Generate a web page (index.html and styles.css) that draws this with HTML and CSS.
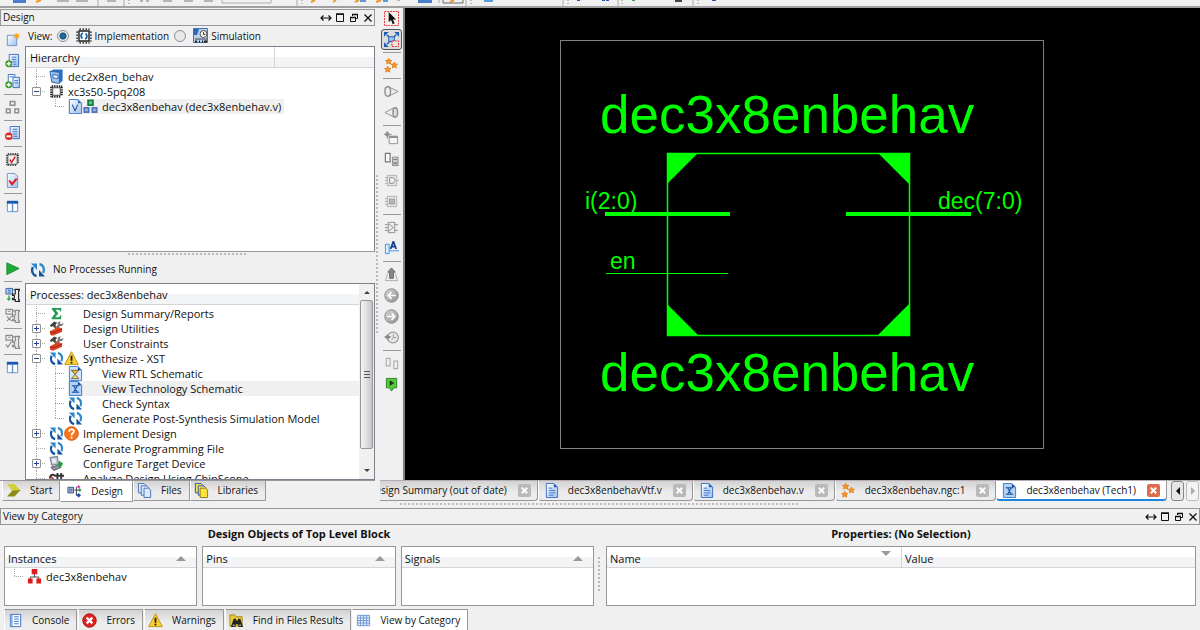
FILE: index.html
```html
<!DOCTYPE html>
<html lang="en">
<head>
    <meta charset="UTF-8">
    <meta name="viewport" content="width=device-width, initial-scale=1.0">
    <title>ISE Project Navigator - dec3x8enbehav</title>
    <link rel="stylesheet" href="styles.css">
</head>
<body>
    <!-- icon set -->
    <svg class="sprite" aria-hidden="true">
        <defs>
            <linearGradient id="paper" x1="0" y1="0" x2="1" y2="1"><stop offset="0" stop-color="#fff"/><stop offset="1" stop-color="#9cc0ec"/></linearGradient>
            <linearGradient id="ball" x1="0" y1="0" x2="1" y2="1"><stop offset="0" stop-color="#d8d8d8"/><stop offset="1" stop-color="#8e8e8e"/></linearGradient>
            <symbol id="i-new" viewBox="0 0 16 16"><path d="M2.500 3.500h10v11h-10z" fill="url(#paper)" stroke="#6f93c9"/><path d="M12 0l1 2.500 2.500-1-1 2.500 1.500 1-2 .8.300 2.200-2.300-1.500-1.800 1 .5-2.200-2.200-1 2.300-.8-.6-2 1.800 1z" fill="#f7a823"/></symbol>
            <symbol id="i-doc" viewBox="0 0 16 16"><path d="M2.500.500h8l4 4v11h-12z" fill="url(#paper)" stroke="#3a6fc4"/><path d="M10.500.500v4h4z" fill="#1d57b8"/><path d="M5 5.500h4M5 8h7M5 10.500h7M5 13h5" stroke="#3470cc" fill="none"/></symbol>
            <symbol id="i-add" viewBox="0 0 16 16"><path d="M4.500 1.500h10v13h-10z" fill="url(#paper)" stroke="#3a6fc4"/><path d="M7 4.500h5M7 7h5M7 9.500h5M9 12h3" stroke="#3470cc"/><circle cx="4" cy="11.500" r="3.700" fill="#3f9c2c"/><path d="M4 9.300v4.400M1.800 11.500h4.400" stroke="#fff" stroke-width="1.500"/></symbol>
            <symbol id="i-addcopy" viewBox="0 0 16 16"><path d="M3.500.500h7v10h-7z" fill="#fff" stroke="#3a6fc4"/><path d="M8.500 3.500h7v11h-7z" fill="url(#paper)" stroke="#3a6fc4"/><path d="M5 3h4M10 7h4M10 9.500h4" stroke="#3470cc"/><circle cx="4" cy="11.500" r="3.700" fill="#3f9c2c"/><path d="M4 9.300v4.400M1.800 11.500h4.400" stroke="#fff" stroke-width="1.500"/></symbol>
            <symbol id="i-remove" viewBox="0 0 16 16"><path d="M5.500.500h10v13h-10z" fill="url(#paper)" stroke="#3a6fc4"/><path d="M8 3.500h5M8 6h5M8 8.500h5M9 11h4" stroke="#3470cc"/><circle cx="4" cy="11" r="4" fill="#e0261c"/><path d="M1.500 11h5" stroke="#fff" stroke-width="2"/></symbol>
            <symbol id="i-hier-gray" viewBox="0 0 16 16"><g fill="#eee" stroke="#8f8f8f" stroke-width="1.600"><path d="M5.500 1.500h5v4h-5zM1.500 9.500h4v4h-4zM10.500 9.500h4v4h-4z"/></g></symbol>
            <symbol id="i-hier-green" viewBox="0 0 16 16"><path d="M5.500 1.500h5v5h-5z" fill="#6cc48d" stroke="#138342" stroke-width="2"/><path d="M1.500 9.500h4.500v4.500h-4.500zM10 9.500h4.500v4.500h-4.500z" fill="#a9bfe6" stroke="#5274bd" stroke-width="2"/></symbol>
            <symbol id="i-hier-red" viewBox="0 0 16 16"><path d="M8 5v4M3.500 11V8.500h9V11" fill="none" stroke="#444"/><path d="M5 0h6v5.500H5zM1 10h5v5.500H1zM10 10h5v5.500h-5z" fill="#e01b1f"/></symbol>
            <symbol id="i-chipcheck" viewBox="0 0 16 16"><path d="M3 3h10v10H3z" fill="#f4f4f4" stroke="#555"/><path d="M3 2h11M3 14h10M2 3v11M14 3v10" stroke="#444" stroke-width="2" stroke-dasharray="1.300 1.200"/><path d="M5 8l2 3 4-6" fill="none" stroke="#dc1f26" stroke-width="1.600"/></symbol>
            <symbol id="i-doccheck" viewBox="0 0 16 16"><path d="M2.500.500h8l3 3v12h-11z" fill="url(#paper)" stroke="#6f93c9"/><path d="M4.500 8l3 4 5-6" fill="none" stroke="#dc1f26" stroke-width="2.200"/></symbol>
            <symbol id="i-table" viewBox="0 0 16 16"><path d="M2.500 2.500h11v11h-11z" fill="#fff" stroke="#5e8fd0"/><path d="M2 2h12v3H2z" fill="#1758b5"/><path d="M8 5v9" stroke="#5e8fd0" stroke-width="1.500"/></symbol>
            <symbol id="i-play" viewBox="0 0 16 16"><path d="M2 2l13 6-13 6.500z" fill="#1eaa3a" stroke="#178c2e"/></symbol>
            <symbol id="i-run" viewBox="0 0 16 16"><path d="M1 1.500h7v6H1z" fill="#bcd4f4" stroke="#31649f"/><path d="M3 3.500h3M3 5.500h3M8 3h3" stroke="#31649f"/><path d="M3.500 9v3H1.500L4 15l2.500-3H5V9z" fill="#2bab3f"/><path d="M11 2.500h5V4h-1.500v10H16v1.500h-5v-2H8V12h2V9H8V7.500h3z" fill="#eee" stroke="#222" stroke-width="1.200"/></symbol>
            <symbol id="i-runx" viewBox="0 0 16 16"><path d="M1 1.500h7v5H1zM3 3.500h3M8 3h3M2 9l5 5M7 9l-5 5" stroke="#8c8c8c" stroke-width="1.200" fill="none"/><path d="M11 2.500h5V4h-1.500v10H16v1.500h-5v-2H8V12h2V9H8V7.500h3z" fill="#e4e4e4" stroke="#8a8a8a" stroke-width="1.200"/></symbol>
            <symbol id="i-runck" viewBox="0 0 16 16"><path d="M1 1.500h7v5H1zM3 3.500h3M8 3h3M1 11l2 3 4-6" stroke="#8c8c8c" stroke-width="1.200" fill="none"/><path d="M11 2.500h5V4h-1.500v10H16v1.500h-5v-2H8V12h2V9H8V7.500h3z" fill="#e4e4e4" stroke="#8a8a8a" stroke-width="1.200"/></symbol>
            <symbol id="i-chip" viewBox="0 0 16 16"><path d="M4 4h8v8H4z" fill="#fff" stroke="#555"/><path d="M3 2.500h11M3 13.500h10M2.500 3v11M13.500 3v10" stroke="#222" stroke-width="2.500" stroke-dasharray="1.500 1"/></symbol>
            <symbol id="i-chipview" viewBox="0 0 16 16"><path d="M3 3h10v10H3z" fill="#fff" stroke="#222" stroke-width="1.400"/><path d="M3.500 1.200h10M3.500 14.800h10M1.200 3.500v10M14.800 3.500v10" stroke="#222" stroke-width="2" stroke-dasharray="1.300 1.700"/><path d="M7 5C4.500 6 4.500 9 6.500 10.500M9 11c2.500-1 2.500-4 .5-5.500" fill="none" stroke="#1766ae" stroke-width="1.800"/></symbol>
            <symbol id="i-sim" viewBox="0 0 16 16"><path d="M.500.500h14v14H.500z" fill="#b9cfea" stroke="#4673ad"/><path d="M1 1h5l-2 6H1z" fill="#2968ba"/><circle cx="10.500" cy="6" r="3.500" fill="#eee" stroke="#555"/><path d="M10.500 4v2.500h2M2 11h12" fill="none" stroke="#444"/><path d="M2 13.500h2M6 13.500h1M9 13.500h1M11 13.500h3" stroke="#222" stroke-width="2"/></symbol>
            <symbol id="i-project" viewBox="0 0 16 16"><path d="M2 2l3-1.500h9.500v12L12 15z" fill="#2c70c1"/><path d="M1 2.500l10 1V15.500L3 14z" fill="#9cc4ee" stroke="#2361b0"/><path d="M4 6l5.500.700v3.500L4.500 9.500z" fill="#fff" stroke="#2361b0"/></symbol>
            <symbol id="i-verilog" viewBox="0 0 16 16"><path d="M1.500.500h9l4 4v11h-13z" fill="url(#paper)" stroke="#3a7bd0"/><path d="M10.500.500v4h4z" fill="#2c6cc2"/><path d="M4.500 6l3 6.500 3-6.500" fill="none" stroke="#1b4f9c" stroke-width="1.200"/></symbol>
            <symbol id="i-sigma" viewBox="0 0 16 16"><path d="M3 2h10v3.500h-1.300L11 4H7l3 4-3.500 4H11l1-1.800h1.300L12.700 14H3v-1.500L6.500 8 3 3.500z" fill="#1d9c51"/></symbol>
            <symbol id="i-tools" viewBox="0 0 16 16"><path d="M6 6l6 6" stroke="#9a5b2c" stroke-width="2.500"/><path d="M1 4.500L5.500.500 9.500 2l-2 .8L6.500 7 4 5.500 2 6.500z" fill="#444"/><path d="M15.500 2l-3 1.500-1-1.500 1.500-1.500C10 0 9 2 9.500 4L7 7l1.500 1.500 3-3C13.500 6 15.500 4 15.500 2z" fill="#777"/><path d="M1 11l9-4.500 4 1.500v3.500L5 15.500H2.500L1 14z" fill="#dd4424"/><path d="M1 11.500l4 1 9-4" stroke="#8c2412" fill="none"/></symbol>
            <symbol id="i-cycle" viewBox="0 0 16 16"><path d="M6.500 14C2.500 13 1 9 2.800 5" fill="none" stroke="#15559d" stroke-width="2.400"/><path d="M1 1.500h6V8z" fill="#2f88cc"/><path d="M9.500 2C13.500 3 15 7 13.200 11" fill="none" stroke="#2f88cc" stroke-width="2.400"/><path d="M15 14.500H9V8z" fill="#15559d"/></symbol>
            <symbol id="i-warn" viewBox="0 0 16 16"><path d="M8 .8l7.300 13.700H.700z" fill="#fbd02f" stroke="#c09113"/><path d="M8 5v5.500M8 11.500v1.800" stroke="#222" stroke-width="2"/></symbol>
            <symbol id="i-rtl" viewBox="0 0 16 16"><path d="M1.500.500h9l4 4v11h-13z" fill="#d4e5fa" stroke="#3a7bd0"/><path d="M10.500.500v4h4z" fill="#174f9e"/><path d="M3.500 4.500h8L7.500 9z" fill="#f2b81f" stroke="#333" stroke-width=".7"/><path d="M3.500 13.500h8l-4-4.500z" fill="#fbd953" stroke="#333" stroke-width=".7"/></symbol>
            <symbol id="i-tech" viewBox="0 0 16 16"><path d="M1.500.500h9l4 4v11h-13z" fill="#b5d2f5" stroke="#3a7bd0"/><path d="M10.500.500v4h4z" fill="#174f9e"/><path d="M4 5h2l4 7h2M4 12h2l4-7h2M6 5h4M6 12h4" fill="none" stroke="#16509f" stroke-width="1.200"/></symbol>
            <symbol id="i-question" viewBox="0 0 16 16"><circle cx="8" cy="8" r="7.300" fill="#f5751a" stroke="#d85410"/><path d="M5.500 6c0-3.500 5.500-3 5 0-.3 1.500-2.500 1.700-2.500 4M8 11.500v1.800" fill="none" stroke="#fff" stroke-width="1.900"/></symbol>
            <symbol id="i-config" viewBox="0 0 16 16"><path d="M1 1.500l8-1 1 8-7 1.500z" fill="#c6cad8" stroke="#666c86"/><path d="M3 3.500l4-.5.5 4-3.500.7z" fill="#e9edf7"/><path d="M2 12l8-2 3 2-8 3.500z" fill="#8f95aa" stroke="#555"/><path d="M11 5l4 3-3 5-3-3z" fill="#2a9c44"/></symbol>
            <symbol id="i-scope" viewBox="0 0 16 16"><path d="M1 8c0-5 5-5 6-2M9 2v12M13 2v12M7 5h9M7 10h9" fill="none" stroke="#333" stroke-width="2"/><path d="M2 6l3 3" stroke="#cf3b22" stroke-width="2"/></symbol>
            <symbol id="i-start" viewBox="0 0 16 16"><path d="M1 1h8l6.500 6.500L9 9H7z" fill="#d3d13b"/><path d="M7 8l8.500-.5L9 14.500H1z" fill="#8d8c14"/></symbol>
            <symbol id="i-design" viewBox="0 0 16 16"><path d="M1 3.500h6v6H1z" fill="#cbd9ee" stroke="#26477f"/><path d="M2 5.500h4M2 7.500h4" stroke="#26477f"/><path d="M8 6.500h4M10 3v9h2" stroke="#334" fill="none"/><path d="M12.500 1l2 2-2 2-2-2z" fill="#d54ba6"/><path d="M13.500 4.500l2 2-2 2-2-2z" fill="#2a9c44"/><path d="M12.500 9.500l2.500 2.500-2.500 2.500L10 12z" fill="#1d50b0"/></symbol>
            <symbol id="i-files" viewBox="0 0 16 16"><g fill="#dce9fa" stroke="#4471b5"><path d="M1.500.500h6l2 2v8h-8z"/><path d="M4.500 3h6l2 2v8h-8z"/><path d="M7.500 5.500h5l2 2v8h-7z"/></g></symbol>
            <symbol id="i-libs" viewBox="0 0 16 16"><path d="M1.500.500h6l2 2v8h-8z" fill="#f7e15a" stroke="#2257a5"/><path d="M4.500 3h6l2 2v8h-8z" fill="#fbe96f" stroke="#2257a5"/><path d="M6.500 5.500h6l2 2v8h-8z" fill="#fde43c" stroke="#87741a"/></symbol>
            <symbol id="i-stars" viewBox="0 0 16 16"><g fill="#f49a2a" stroke="#e3801a"><path id="star" d="M5 .500l1 2 2.300.200-1.700 1.500.500 2.300L5 5.300 2.900 6.500l.5-2.300L1.700 2.700 4 2.500z"/><use href="#star" x="6" y="4"/><use href="#star" x="-1" y="8.500"/></g></symbol>
            <symbol id="i-console" viewBox="0 0 16 16"><path d="M2.500 1.500h11v13h-11z" fill="#fff" stroke="#3a6fc4"/><path d="M3 2h2v12H3z" fill="#86b2ec"/><path d="M6.500 4h5M6.500 6.500h5M6.500 9h5M6.500 11.500h5" stroke="#3470cc"/></symbol>
            <symbol id="i-error" viewBox="0 0 16 16"><circle cx="8" cy="8" r="7.200" fill="#dc2320" stroke="#a91410"/><path d="M5 5l6 6M11 5l-6 6" stroke="#fff" stroke-width="2.500"/></symbol>
            <symbol id="i-find" viewBox="0 0 16 16"><path d="M1 2h5l1.500 2H14v10H1z" fill="#e9c93a" stroke="#a68714"/><path d="M5 6h2.500v2h2V6H12l3 9h-4.500l-1-3h-2l-1 3H2z" fill="#222"/><path d="M4 13h2M11 13h2" stroke="#fff"/></symbol>
            <symbol id="i-grid" viewBox="0 0 16 16"><path d="M1.500 2.500h13v11h-13z" fill="#e4eefb"/><path d="M1.500 2.500h13v11h-13zM1 5.300h14M1 8h14M1 10.700h14M4.700 2v12M8 2v12M11.300 2v12" fill="none" stroke="#6b97d6"/></symbol>
            <symbol id="i-select" viewBox="0 0 16 16"><path d="M.500.500h15v15H.500z" fill="#f7f0f0" stroke="#e2222c" stroke-dasharray="2 1"/><path d="M5 1v11l2.500-2.300L9.300 14l2-.9L9.500 9H13z" fill="#111"/></symbol>
            <symbol id="i-zoomfit" viewBox="0 0 16 16"><path d="M3 3l10 10M13 3L3 13" stroke="#1c5cb4" stroke-width="1.500"/><path d="M0 0h5L0 5zM16 0h-5l5 5zM0 16h5l-5-5z" fill="#1c5cb4"/><path d="M5 5h6v5H5z" fill="#9bc2f0" stroke="#1c5cb4"/><path d="M8.500 9.500h7v6h-7z" fill="#fbe4e4" stroke="#e2222c" stroke-dasharray="2 1"/></symbol>
            <symbol id="i-gate-r" viewBox="0 0 16 16"><path d="M4 2.500l11 5.500-11 5.500" fill="#eee" stroke="#8f8f8f"/><ellipse cx="4" cy="8" rx="3" ry="5" fill="#eee" stroke="#8f8f8f" stroke-width="1.500"/></symbol>
            <symbol id="i-gate-l" viewBox="0 0 16 16"><path d="M12 2.500L1 8l11 5.500" fill="#eee" stroke="#8f8f8f"/><ellipse cx="12" cy="8" rx="2.500" ry="5" fill="#ddd" stroke="#8f8f8f" stroke-width="1.500"/></symbol>
            <symbol id="i-push" viewBox="0 0 16 16"><path d="M5.500 5.500h9v8h-9z" fill="#f5f5f5" stroke="#8f8f8f"/><path d="M5.500 6.500h9" stroke="#8f8f8f" stroke-width="2"/><path d="M2 2h3v3H2zM0 3.500h8M3.500 0v8" stroke="#888" fill="#ccc"/></symbol>
            <symbol id="i-pop" viewBox="0 0 16 16"><path d="M1.500 1.500h5v9h-5z" fill="#fafafa" stroke="#777" stroke-width="1.300"/><path d="M9 5.500h6v9H9z" fill="#ccc" stroke="#888"/><path d="M10 8h4M10 11l4 2M14 11l-4 2" stroke="#777"/></symbol>
            <symbol id="i-block" viewBox="0 0 16 16"><path d="M3.500 2.500h10v11h-10z" fill="#e3e3e3" stroke="#b0b0b0"/><path d="M6 5h4l2 3-2 3H6z" fill="#eee" stroke="#8c8c8c"/><path d="M1 5h3M1 8h3M1 11h3M13 8h3" stroke="#aaa"/></symbol>
            <symbol id="i-blockx" viewBox="0 0 16 16"><path d="M3.500 2.500h10v11h-10z" fill="#e3e3e3" stroke="#b0b0b0"/><path d="M6 5.500h5v5H6zM6 5.500l5 5M11 5.500l-5 5" fill="none" stroke="#8c8c8c"/><path d="M1 5h3M1 8h3M1 11h3" stroke="#aaa"/></symbol>
            <symbol id="i-mux" viewBox="0 0 16 16"><path d="M4.500 2.500h7v11h-7z" fill="#eee" stroke="#8c8c8c"/><path d="M5 4l5 4-5 4M1 5h3M1 8h3M1 11h3M11 5h4M11 11h4" fill="none" stroke="#8c8c8c"/></symbol>
            <symbol id="i-label" viewBox="0 0 16 16"><path d="M1.500 3.500h4v10h-4z" fill="#d4efff" stroke="#3d8fe0"/><path d="M6 10.500h10" stroke="#3d8fe0"/><path d="M7 8.500l3-8 3 8M8 6h4" fill="none" stroke="#123f8f" stroke-width="1.800"/></symbol>
            <symbol id="i-up" viewBox="0 0 16 16"><path d="M4 7L1.500 14.500h13L12 7" fill="#eee" stroke="#aaa"/><path d="M8 1l4 4.500h-2V12H6V5.500H4z" fill="#888" stroke="#666"/></symbol>
            <symbol id="i-back" viewBox="0 0 16 16"><circle cx="8" cy="8" r="7.200" fill="url(#ball)" stroke="#8a8a8a"/><path d="M12.500 8H5M8 4.500L4.500 8 8 11.500" fill="none" stroke="#fff" stroke-width="1.800"/></symbol>
            <symbol id="i-fwd" viewBox="0 0 16 16"><circle cx="8" cy="8" r="7.200" fill="url(#ball)" stroke="#8a8a8a"/><path d="M3.500 8H11M8 4.500L11.500 8 8 11.500" fill="none" stroke="#fff" stroke-width="1.800"/></symbol>
            <symbol id="i-history" viewBox="0 0 16 16"><circle cx="9.500" cy="8" r="5.800" fill="#e8e8e8" stroke="#999" stroke-width="1.300"/><path d="M10 4.500V8h3M10 8l-2 2.500" stroke="#999" fill="none"/><path d="M0 7.500L5 4v2.500h2v2H5V11z" fill="#8b8b8b"/></symbol>
            <symbol id="i-compare" viewBox="0 0 16 16"><path d="M2.500 2.500h4v8h-4zM10.500 5.500h4v8h-4z" fill="#f2f2f2" stroke="#b0b0b0" stroke-width="1.300"/></symbol>
            <symbol id="i-flag" viewBox="0 0 16 16"><path d="M2.500 1.500h11v10h-3L8 15l-2-3.500H2.500z" fill="#55c83c" stroke="#2c8220"/><path d="M6 3.500l5 3-5 3z" fill="#173c14"/></symbol>
            <symbol id="i-float" viewBox="0 0 12 12"><path d="M1 6h10M3.500 3.500L1 6l2.500 2.500M8.500 3.500L11 6 8.500 8.500" fill="none" stroke="#111" stroke-width="1.200"/></symbol>
            <symbol id="i-max" viewBox="0 0 12 12"><path d="M2.500 2.500h7v7h-7z" fill="none" stroke="#111"/><path d="M2 2h8" stroke="#111" stroke-width="1.500"/></symbol>
            <symbol id="i-restore" viewBox="0 0 12 12"><path d="M4.500 4V2.500h5v4H8M2.500 5.500h5v4h-5z" fill="none" stroke="#111"/><path d="M4 2.500h6M2 5.500h6" stroke="#111" stroke-width="1.500"/></symbol>
            <symbol id="i-close" viewBox="0 0 12 12"><path d="M2.500 2.500l7 7M9.500 2.500l-7 7" stroke="#111" stroke-width="1.300"/></symbol>
            <symbol id="i-tabx" viewBox="0 0 12 12"><path d="M3.500 3.500l5 5M8.500 3.500l-5 5" stroke="#fff" stroke-width="1.800"/></symbol>
        </defs>
    </svg>

    <header class="main-toolbar">
        <svg width="760" height="6" aria-hidden="true">
            <path d="M13 0h13v3H13zM418 0h14v3h-14z" fill="#4b7fce"/>
            <path d="M36 2l5-2M311 2l4-2M333 2l3-2M355 2l4-2M376 2l5-2M450 2l4-2" stroke="#ea9a2c" stroke-width="2"/>
            <path d="M57 1h12M76 1h12M107 1h9M140 1h3M146 1h3M163 1h9M184 1h9M204 1h9M397 0h3" stroke="#b5b5b5" stroke-width="2"/>
            <path d="M98 0v6M124 0v6M222 0v3h49v-3M297 0v6M439 0v3M466 0v6M563 0v6M618 0v6M693 0v6" fill="none" stroke="#aaa"/>
            <path d="M129 0v6M302 0v6M471 0v6M568 0v6M622 0v6M698 0v6" stroke="#bbb" stroke-width="2" stroke-dasharray="1 2"/>
            <path d="M443 0v3h20v-3" fill="none" stroke="#666"/>
            <path d="M484 1h9M360 1h6M383 1h5" stroke="#5d9bd8" stroke-width="2"/>
            <path d="M577 0h3M602 0h3M606 0h3M712 0h4" stroke="#2b55a8" stroke-width="2"/>
            <path d="M632 0h3" stroke="#3a9c4c" stroke-width="2"/><path d="M675 1h7" stroke="#444" stroke-width="2"/>
        </svg>
    </header>

    <main class="workspace">
        <section class="dock">
            <div class="dock-title">
                <span>Design</span>
                <div class="dock-buttons">
                    <button aria-label="Float"><svg><use href="#i-float"/></svg></button>
                    <button aria-label="Maximize"><svg><use href="#i-max"/></svg></button>
                    <button aria-label="Restore"><svg><use href="#i-restore"/></svg></button>
                    <button aria-label="Close"><svg><use href="#i-close"/></svg></button>
                </div>
            </div>

            <div class="pane hierarchy-pane">
                <div class="side-tools">
                    <button aria-label="New source"><svg><use href="#i-new"/></svg></button>
                    <button aria-label="Add source"><svg><use href="#i-add"/></svg></button>
                    <button aria-label="Add copy of source"><svg><use href="#i-addcopy"/></svg></button>
                    <hr>
                    <button aria-label="Hierarchy"><svg><use href="#i-hier-gray"/></svg></button>
                    <hr>
                    <button aria-label="Remove source"><svg><use href="#i-remove"/></svg></button>
                    <hr>
                    <button aria-label="Design properties"><svg><use href="#i-chipcheck"/></svg></button>
                    <button aria-label="Design goals"><svg><use href="#i-doccheck"/></svg></button>
                    <hr>
                    <button aria-label="Columns"><svg><use href="#i-table"/></svg></button>
                </div>
                <div class="pane-body">
                    <div class="view-row">
                        <span>View:</span>
                        <input type="radio" name="view" id="view-impl" checked>
                        <label for="view-impl"><svg><use href="#i-chipview"/></svg>Implementation</label>
                        <input type="radio" name="view" id="view-sim">
                        <label for="view-sim"><svg><use href="#i-sim"/></svg>Simulation</label>
                    </div>
                    <div class="tree-box">
                        <div class="tree-head"><span class="head-cell">Hierarchy</span></div>
                        <ul class="tree">
                            <li><i class="tee"></i><svg><use href="#i-project"/></svg><span>dec2x8en_behav</span></li>
                            <li><i class="node last"><button class="minus" aria-label="Collapse"></button></i><svg><use href="#i-chip"/></svg><span>xc3s50-5pq208</span></li>
                            <li><i></i><i class="elbow"></i><div class="picked"><svg><use href="#i-verilog"/></svg><svg><use href="#i-hier-green"/></svg><span>dec3x8enbehav (dec3x8enbehav.v)</span></div></li>
                        </ul>
                    </div>
                </div>
            </div>

            <div class="grip-h"></div>

            <div class="pane process-pane">
                <div class="side-tools">
                    <button aria-label="Run"><svg><use href="#i-play"/></svg></button>
                    <hr>
                    <button aria-label="Run process"><svg><use href="#i-run"/></svg></button>
                    <button aria-label="Stop process"><svg><use href="#i-runx"/></svg></button>
                    <hr>
                    <button aria-label="Force up to date"><svg><use href="#i-runck"/></svg></button>
                    <hr>
                    <button aria-label="Columns"><svg><use href="#i-table"/></svg></button>
                </div>
                <div class="pane-body">
                    <div class="status-row"><svg><use href="#i-cycle"/></svg>No Processes Running</div>
                    <div class="tree-box scrolled">
                        <div class="tree-area">
                            <div class="tree-head">Processes: dec3x8enbehav</div>
                            <ul class="tree">
                                <li><i class="tee"></i><svg><use href="#i-sigma"/></svg><span class="wide">Design Summary/Reports</span></li>
                                <li><i class="node"><button class="plus" aria-label="Expand"></button></i><svg><use href="#i-tools"/></svg><span class="wide">Design Utilities</span></li>
                                <li><i class="node"><button class="plus" aria-label="Expand"></button></i><svg><use href="#i-tools"/></svg><span class="wide">User Constraints</span></li>
                                <li><i class="node"><button class="minus" aria-label="Collapse"></button></i><svg><use href="#i-cycle"/></svg><svg><use href="#i-warn"/></svg><span>Synthesize - XST</span></li>
                                <li><i class="line"></i><i class="tee"></i><svg><use href="#i-rtl"/></svg><span class="wide">View RTL Schematic</span></li>
                                <li><i class="line"></i><i class="tee"></i><div class="picked full"><svg><use href="#i-tech"/></svg><span class="wide">View Technology Schematic</span></div></li>
                                <li><i class="line"></i><i class="tee"></i><svg><use href="#i-cycle"/></svg><span class="wide">Check Syntax</span></li>
                                <li><i class="line"></i><i class="elbow"></i><svg><use href="#i-cycle"/></svg><span class="wide">Generate Post-Synthesis Simulation Model</span></li>
                                <li><i class="node"><button class="plus" aria-label="Expand"></button></i><svg><use href="#i-cycle"/></svg><svg><use href="#i-question"/></svg><span>Implement Design</span></li>
                                <li><i class="tee"></i><svg><use href="#i-cycle"/></svg><span class="wide">Generate Programming File</span></li>
                                <li><i class="node"><button class="plus" aria-label="Expand"></button></i><svg><use href="#i-config"/></svg><span class="wide">Configure Target Device</span></li>
                                <li><i class="elbow"></i><svg><use href="#i-scope"/></svg><span class="wide">Analyze Design Using ChipScope</span></li>
                            </ul>
                        </div>
                        <div class="scrollbar">
                            <span class="arrow-up"></span>
                            <div class="thumb"></div>
                            <span class="arrow-down"></span>
                        </div>
                    </div>
                </div>
            </div>

            <nav class="tabs dock-tabs">
                <button><svg><use href="#i-start"/></svg>Start</button>
                <button class="active"><svg><use href="#i-design"/></svg>Design</button>
                <button><svg><use href="#i-files"/></svg>Files</button>
                <button><svg><use href="#i-libs"/></svg>Libraries</button>
            </nav>
        </section>

        <div class="grip-v"></div>

        <section class="editor">
            <div class="editor-main">
                <div class="side-tools view-tools">
                    <button aria-label="Select"><svg><use href="#i-select"/></svg></button>
                    <button class="pressed" aria-label="Zoom to full view"><svg><use href="#i-zoomfit"/></svg></button>
                    <hr>
                    <button aria-label="Create schematic"><svg><use href="#i-stars"/></svg></button>
                    <hr>
                    <button aria-label="Show drivers"><svg><use href="#i-gate-r"/></svg></button>
                    <button aria-label="Show loads"><svg><use href="#i-gate-l"/></svg></button>
                    <hr>
                    <button aria-label="Push"><svg><use href="#i-push"/></svg></button>
                    <button aria-label="Pop"><svg><use href="#i-pop"/></svg></button>
                    <button aria-label="Show block"><svg><use href="#i-block"/></svg></button>
                    <button aria-label="Hide block"><svg><use href="#i-blockx"/></svg></button>
                    <hr>
                    <button aria-label="Ports"><svg><use href="#i-mux"/></svg></button>
                    <button aria-label="Labels"><svg><use href="#i-label"/></svg></button>
                    <hr>
                    <button aria-label="Up"><svg><use href="#i-up"/></svg></button>
                    <button aria-label="Back"><svg><use href="#i-back"/></svg></button>
                    <button aria-label="Forward"><svg><use href="#i-fwd"/></svg></button>
                    <button aria-label="History"><svg><use href="#i-history"/></svg></button>
                    <hr>
                    <button aria-label="Compare"><svg><use href="#i-compare"/></svg></button>
                    <button aria-label="Run marker"><svg><use href="#i-flag"/></svg></button>
                </div>
                <div class="canvas">
                    <svg class="schematic" viewBox="0 0 484 410" width="484" height="410">
                        <rect class="sheet" x="0.5" y="0.5" width="483" height="408"/>
                        <text class="block-name" x="40" y="93">dec3x8enbehav</text>
                        <text class="block-name" x="40" y="351">dec3x8enbehav</text>
                        <rect class="block" x="107.500" y="113.500" width="242" height="182"/>
                        <path class="corner" d="M107 113h31l-31 31zM350 113h-32l32 32zM107 296h32l-32-32zM350 296h-33l33-33z"/>
                        <path class="bus" d="M45 174h125M286 174h125"/>
                        <path class="wire" d="M46 233.500h122"/>
                        <text class="pin" x="25" y="169">i(2:0)</text>
                        <text class="pin" x="50" y="229">en</text>
                        <text class="pin" x="378" y="169">dec(7:0)</text>
                    </svg>
                </div>
            </div>
            <div class="editor-tabs">
                <div class="tabs file-tabs">
                    <div class="tab summary">Design Summary (out of date)<button aria-label="Close tab"><svg><use href="#i-tabx"/></svg></button></div>
                    <div class="tab"><svg><use href="#i-doc"/></svg><span>dec3x8enbehavVtf.v</span><button aria-label="Close tab"><svg><use href="#i-tabx"/></svg></button></div>
                    <div class="tab"><svg><use href="#i-doc"/></svg><span>dec3x8enbehav.v</span><button aria-label="Close tab"><svg><use href="#i-tabx"/></svg></button></div>
                    <div class="tab"><svg><use href="#i-stars"/></svg><span>dec3x8enbehav.ngc:1</span><button aria-label="Close tab"><svg><use href="#i-tabx"/></svg></button></div>
                    <div class="tab active"><svg><use href="#i-tech"/></svg><span>dec3x8enbehav (Tech1)</span><button aria-label="Close tab"><svg><use href="#i-tabx"/></svg></button></div>
                </div>
                <button class="scroll-btn" aria-label="Previous tabs"><span class="left"></span></button>
                <button class="scroll-btn off" aria-label="Next tabs"><span class="right"></span></button>
            </div>
        </section>
    </main>

    <div class="grip-h wide-grip"></div>

    <section class="category">
        <div class="dock-title">
            <span>View by Category</span>
            <div class="dock-buttons">
                <button aria-label="Float"><svg><use href="#i-float"/></svg></button>
                <button aria-label="Maximize"><svg><use href="#i-max"/></svg></button>
                <button aria-label="Restore"><svg><use href="#i-restore"/></svg></button>
                <button aria-label="Close"><svg><use href="#i-close"/></svg></button>
            </div>
        </div>
        <div class="category-body">
            <div class="half">
                <h2>Design Objects of Top Level Block</h2>
                <div class="lists">
                    <div class="list">
                        <div class="tree-head sorted">Instances</div>
                        <ul class="tree">
                            <li><i class="elbow"></i><svg><use href="#i-hier-red"/></svg><span>dec3x8enbehav</span></li>
                        </ul>
                    </div>
                    <div class="list"><div class="tree-head sorted">Pins</div></div>
                    <div class="list"><div class="tree-head sorted">Signals</div></div>
                </div>
            </div>
            <div class="grip-v short"></div>
            <div class="half">
                <h2>Properties: (No Selection)</h2>
                <div class="list">
                    <table>
                        <thead><tr><th class="tree-head sorted down">Name</th><th class="tree-head">Value</th></tr></thead>
                        <tbody></tbody>
                    </table>
                </div>
            </div>
        </div>
        <nav class="tabs bottom-tabs">
            <button><svg><use href="#i-console"/></svg>Console</button>
            <button><svg><use href="#i-error"/></svg>Errors</button>
            <button><svg><use href="#i-warn"/></svg>Warnings</button>
            <button><svg><use href="#i-find"/></svg>Find in Files Results</button>
            <button class="active"><svg><use href="#i-grid"/></svg>View by Category</button>
        </nav>
    </section>
</body>
</html>
```
FILE: styles.css
```css
* {
    box-sizing: border-box;
}

body {
    margin: 0;
    height: 100vh;
    display: flex;
    flex-direction: column;
    overflow: hidden;
    background: #f0f0f0;
    color: #111;
    font-family: "Open Sans", "Noto Sans", sans-serif;
    font-size: 11px;
    line-height: 15px;
    white-space: nowrap;
}

button {
    margin: 0;
    padding: 0;
    border: none;
    background: none;
    color: inherit;
    font: inherit;
}

svg {
    display: block;
    flex: none;
    width: 16px;
    height: 16px;
}

.sprite {
    position: absolute;
    width: 0;
    height: 0;
}

/* top toolbar, scrolled almost out of view */
.main-toolbar {
    flex: none;
    height: 8px;
    border-bottom: 2px solid #a0a0a0;
    overflow: hidden;
}

.main-toolbar svg {
    width: 760px;
    height: 6px;
}

.workspace {
    flex: 1;
    min-height: 0;
    display: flex;
}

/* docks */
.dock {
    flex: none;
    width: 375px;
    display: flex;
    flex-direction: column;
    padding-top: 1px;
}

.dock-title {
    flex: none;
    height: 17px;
    display: flex;
    align-items: center;
    justify-content: space-between;
    padding: 0 0 0 2px;
    border: 1px solid #979797;
    font-size: 10px;
}

.dock-buttons {
    display: flex;
    gap: 2px;
}

.dock-buttons svg {
    width: 12px;
    height: 12px;
}

.pane {
    display: flex;
    min-height: 0;
}

.hierarchy-pane {
    flex: none;
    height: 226px;
    border-bottom: 1px solid #979797;
}

.process-pane {
    flex: 1;
}

.side-tools {
    flex: none;
    width: 25px;
    padding-top: 3px;
    display: flex;
    flex-direction: column;
    align-items: center;
}

.process-pane .side-tools {
    padding-top: 2px;
}

.side-tools button {
    flex: none;
    width: 21px;
    height: 21px;
    display: flex;
    align-items: center;
    justify-content: center;
}

.side-tools svg {
    width: 15px;
    height: 15px;
}

.side-tools hr {
    flex: none;
    width: 18px;
    height: 5px;
    margin: 0;
    border: none;
    background: linear-gradient(#999, #999) center / 100% 1px no-repeat;
}

.pane-body {
    flex: 1;
    min-width: 0;
    display: flex;
    flex-direction: column;
}

.view-row {
    flex: none;
    height: 20px;
    display: flex;
    align-items: center;
    padding-left: 3px;
    font-size: 10px;
}

.view-row input {
    width: 12px;
    height: 12px;
    margin: 0 7px 0 5px;
    appearance: none;
    border: 1px solid #8a8f94;
    border-radius: 50%;
    background: #e8e8e8;
}

.view-row input:checked {
    background: radial-gradient(circle, #1d6ea6 0 2px, #134a72 3px, #eee 4px);
}

.view-row label {
    display: flex;
    align-items: center;
    gap: 2px;
}

.tree-box {
    flex: 1;
    min-height: 0;
    border: 1px solid #7b808c;
    background: #fff;
    overflow: hidden;
}

.hierarchy-pane .tree-box {
    border-bottom: none;
}

.tree-head {
    height: 21px;
    padding: 3px 4px 0;
    border-bottom: 1px solid #d5d5d5;
    background: linear-gradient(#fff 50%, #f3f4f5 50%);
    font-weight: normal;
    text-align: left;
}

.hierarchy-pane .tree-head {
    padding: 0;
}

.head-cell {
    display: block;
    width: 249px;
    height: 20px;
    padding: 3px 4px 0;
    border-right: 1px solid #d5d5d5;
}

.status-row {
    flex: none;
    height: 27px;
    display: flex;
    align-items: center;
    gap: 7px;
    padding-left: 5px;
    font-size: 10px;
}

/* trees */
.tree {
    margin: 0;
    padding: 1px 0 0 1px;
    list-style: none;
}

.tree li {
    display: flex;
    height: 15px;
}

.tree svg {
    width: 15px;
    height: 15px;
}

.tree i {
    flex: none;
    width: 19px;
    height: 15px;
    --dots-h: repeating-linear-gradient(to right, #aaa 0 1px, transparent 1px 2px) 9px 7px / 10px 1px no-repeat;
    --dots-v: repeating-linear-gradient(to bottom, #aaa 0 1px, transparent 1px 2px);
}

.tree i + svg,
.tree i + .picked {
    margin-left: 3px;
}

.tree .line {
    background: var(--dots-v) 9px 0 / 1px 15px no-repeat;
}

.tree .tee,
.tree .node {
    background: var(--dots-h), var(--dots-v) 9px 0 / 1px 15px no-repeat;
}

.tree .elbow,
.tree .node.last {
    background: var(--dots-h), var(--dots-v) 9px 0 / 1px 8px no-repeat;
}

.node button {
    display: block;
    width: 9px;
    height: 9px;
    margin: 3px 0 0 5px;
    border: 1px solid #919191;
    border-radius: 1px;
    background: linear-gradient(#24489b, #24489b) center / 5px 1px no-repeat, #fff;
}

.node .plus {
    background: linear-gradient(#24489b, #24489b) center / 5px 1px no-repeat, linear-gradient(#24489b, #24489b) center / 1px 5px no-repeat, #fff;
}

.tree span {
    padding-left: 4px;
}

.tree .wide {
    padding-left: 19px;
}

.picked {
    display: flex;
    padding-right: 3px;
    background: #f0f0f0;
}

.picked.full {
    flex: 1;
}

.scrolled {
    display: flex;
}

.tree-area {
    flex: 1;
    min-width: 0;
}

.scrollbar {
    flex: none;
    width: 15px;
    display: flex;
    flex-direction: column;
    align-items: center;
    background: #f0f0f0;
}

.scrollbar .thumb {
    flex: 1;
    width: 13px;
    margin: 6px 0 20px;
    border: 1px solid #979797;
    border-radius: 2px;
    background: repeating-linear-gradient(#555 0 1px, transparent 1px 3px) center / 6px 8px no-repeat, linear-gradient(to right, #f5f5f5, #e0e0e0 50%, #c4c4c6);
}

.arrow-up,
.arrow-down {
    margin: 7px 0 0;
    border: 3px solid transparent;
    border-top: none;
    border-bottom: 3px solid #444;
}

.arrow-down {
    margin: 0 0 7px;
    border-bottom: none;
    border-top: 3px solid #444;
}

/* dotted splitters */
.grip-h {
    flex: none;
    height: 4px;
    background: repeating-linear-gradient(to right, #bbb 0 2px, transparent 2px 4px) center 1px / 120px 2px no-repeat;
}

.wide-grip {
    height: 6px;
    background-size: 400px 2px;
}

.grip-v {
    flex: none;
    width: 5px;
    background: repeating-linear-gradient(#bbb 0 2px, transparent 2px 4px) 1px center / 2px 160px no-repeat;
}

.grip-v.short {
    width: 12px;
    background-size: 2px 36px;
    background-position: 4px 32px;
}

/* tabs */
.tabs {
    flex: none;
    display: flex;
    font-size: 10px;
}

.tabs > button,
.tab {
    display: flex;
    align-items: center;
    height: 20px;
    border: 1px solid #979797;
    border-top: none;
    border-left-color: #fff;
    background: linear-gradient(#d2d2d2, #ececec 60%);
}

.tabs > .active {
    background: #fff;
}

.dock-tabs {
    height: 22px;
    padding-left: 2px;
    border-top: 1px solid #979797;
}

.dock-tabs > button {
    padding: 0 7px 0 3px;
    gap: 9px;
}

.dock-tabs > .active {
    height: 21px;
    padding: 0 9px 0 6px;
}

.dock-tabs svg,
.bottom-tabs svg {
    width: 15px;
    height: 15px;
}

/* editor */
.editor {
    flex: 1;
    min-width: 0;
    display: flex;
    flex-direction: column;
}

.editor-main {
    flex: 1;
    min-height: 0;
    display: flex;
}

.view-tools {
    width: 23px;
    padding-top: 0;
}

.view-tools .pressed {
    border: 1px solid #555;
    border-radius: 3px;
    background: #dcdcdc;
}

.canvas {
    flex: 1;
    min-width: 0;
    display: flex;
    align-items: center;
    justify-content: center;
    padding: 1px 2px 0 0;
    border-left: 2px solid #808080;
    background: #000;
}

.schematic {
    width: 484px;
    height: 410px;
    font-family: "Liberation Sans", Arial, sans-serif;
    fill: #0f0;
}

.sheet {
    fill: none;
    stroke: #808080;
}

.block {
    fill: none;
    stroke: #0f0;
    stroke-width: 1.5;
}

.bus {
    stroke: #0f0;
    stroke-width: 4;
}

.wire {
    stroke: #0f0;
}

.block-name {
    font-size: 53px;
}

.pin {
    font-size: 23px;
}

.editor-tabs {
    flex: none;
    display: flex;
    align-items: flex-start;
    height: 22px;
    padding-right: 1px;
    border-top: 1px solid #b5aab5;
}

.file-tabs {
    flex: 1;
    min-width: 0;
    overflow: hidden;
    justify-content: flex-end;
    margin-right: 2px;
}

.tab {
    flex: none;
    padding: 0 6px 0 5px;
    border-radius: 0 0 4px 4px;
}

.tab span {
    padding: 0 11px 0 9px;
}

.tab > svg {
    width: 15px;
    height: 15px;
}

.tab button {
    width: 13px;
    height: 13px;
    border-radius: 2px;
    background: #b9b9b9;
}

.tab button svg {
    width: 13px;
    height: 13px;
}

.tab.summary {
    gap: 11px;
}

.file-tabs .active {
    border-bottom: 2px solid #1b84dc;
}

.tab.active button {
    background: #df6c4c;
}

.scroll-btn {
    width: 13px;
    height: 20px;
    margin-left: 2px;
    display: flex;
    align-items: center;
    justify-content: center;
    border: 1px solid #888;
    border-radius: 3px;
    background: #e6e6e6;
}

.scroll-btn.off {
    border-color: #bbb;
    background: #f4f4f4;
}

.scroll-btn span {
    border: 4px solid transparent;
}

.scroll-btn .left {
    border-left: none;
    border-right-color: #111;
}

.scroll-btn .right {
    border-right: none;
    border-left-color: #aaa;
}

/* bottom dock */
.category {
    flex: none;
}

.category-body {
    display: flex;
    padding: 0 4px;
}

.half {
    flex: 1;
    min-width: 0;
}

.half h2 {
    margin: 0;
    height: 21px;
    font-size: 11px;
    line-height: 17px;
    text-align: center;
}

.lists {
    display: flex;
    gap: 5px;
}

.list {
    flex: 1;
    height: 60px;
    border: 1px solid #979797;
    background: #fff;
}

.list .tree {
    padding-left: 0;
}

.list .tree-head {
    display: flex;
    justify-content: space-between;
    padding: 4px 10px 0 3px;
}

.sorted::after {
    content: "";
    height: 5px;
    border: 5px solid transparent;
    border-top: none;
    border-bottom-color: #999;
}

.sorted.down::after {
    border-bottom: none;
    border-top: 5px solid #999;
}

table {
    width: 100%;
    border-collapse: collapse;
}

thead tr {
    display: grid;
    grid-template-columns: 1fr 1fr;
}

th + th {
    border-left: 1px solid #d5d5d5;
}

.bottom-tabs {
    height: 24px;
    padding: 3px 0 0 4px;
}

.bottom-tabs > button {
    gap: 9px;
    margin-right: 1px;
    padding: 0 7px 0 3px;
    border-top: 1px solid #979797;
    border-bottom: none;
    height: 21px;
}
```
